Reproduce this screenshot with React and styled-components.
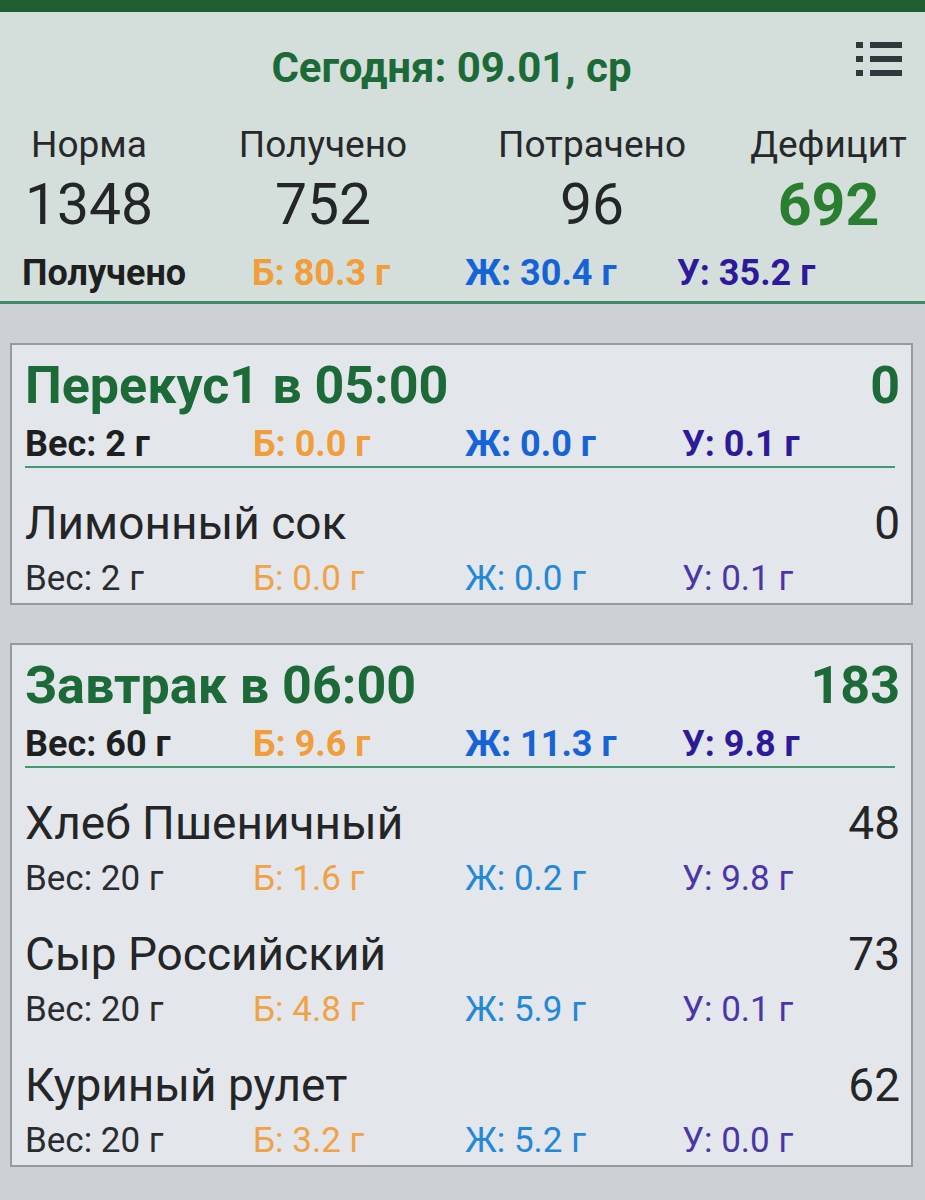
import React from "react";
import styled, { createGlobalStyle } from "styled-components";

const Global = createGlobalStyle`
  html, body { margin: 0; padding: 0; }
  body {
    background: #cdd0d5;
    font-family: Roboto, "Noto Sans", "Liberation Sans", sans-serif;
    color: #1f2123;
  }
`;

const Page = styled.div`
  width: 925px;
  min-height: 1200px;
  background: #cdd0d5;
`;

const TopBar = styled.div`
  height: 12px;
  background: #1d5f31;
`;

const Header = styled.header`
  background: #d4dfdc;
  border-bottom: 3px solid #3b8c66;
  padding: 31px 0 8px;
`;

const TitleRow = styled.div`
  display: grid;
  grid-template-columns: 1fr auto 1fr;
  align-items: center;
  padding-right: 22px;
`;

const Title = styled.h1`
  grid-column: 2;
  margin: 0;
  font-size: 42px;
  line-height: 50px;
  font-weight: 700;
  color: #1c6a37;
`;

const MenuButton = styled.div`
  grid-column: 3;
  justify-self: end;
  display: flex;
  align-self: start;
  margin-top: -2px;
`;

const Stats = styled.div`
  display: grid;
  grid-template-columns: 178px 290px 248px 1fr;
  margin-top: 32px;
`;

const Stat = styled.div`
  display: flex;
  flex-direction: column;
  align-items: center;
  gap: 8px;
  padding-left: ${(p) => p.$offset || 0}px;
`;

const StatLabel = styled.div`
  font-size: 37px;
  line-height: 40px;
  color: #262829;
`;

const StatValue = styled.div`
  font-size: ${(p) => (p.$accent ? 59 : 57)}px;
  line-height: 64px;
  font-weight: ${(p) => (p.$accent ? 700 : 400)};
  color: ${(p) => (p.$accent ? "#2a7e30" : "#232526")};
`;

const MacroRow = styled.div`
  display: grid;
  grid-template-columns: ${(p) => p.$cols};
  padding-left: ${(p) => p.$pad || 0}px;
  margin-top: ${(p) => p.$mt || 0}px;
  font-size: ${(p) => p.$size}px;
  line-height: ${(p) => p.$lh}px;
  font-weight: ${(p) => (p.$bold ? 700 : 400)};
  white-space: nowrap;
`;

const colors = {
  bold: { w: "#1d1f20", b: "#f09d3a", f: "#1663d6", c: "#2c1a98" },
  normal: { w: "#2a2c2e", b: "#f0a247", f: "#2388d6", c: "#4a36a8" },
};

const Macro = styled.span`
  color: ${(p) => colors[p.$bold ? "bold" : "normal"][p.$kind]};
`;

const Content = styled.main`
  padding: 39px 12px 30px 10px;
  display: flex;
  flex-direction: column;
  gap: 38px;
`;

const Card = styled.section`
  background: #e3e6ea;
  border: 2px solid #979a9f;
  padding: 13px 11px 5px 13px;
`;

const RowTop = styled.div`
  display: flex;
  justify-content: space-between;
  align-items: baseline;
  white-space: nowrap;
`;

const MealTitle = styled.div`
  font-size: 52px;
  line-height: 56px;
  font-weight: 700;
  color: #1c6a37;
`;

const Divider = styled.hr`
  margin: 2px 5px 0 0;
  border: 0;
  height: 2px;
  background: #3f9a6e;
`;

const Items = styled.div`
  display: flex;
  flex-direction: column;
  gap: 31px;
  padding-top: 30px;
`;

const ItemName = styled.div`
  font-size: 46px;
  line-height: 50px;
  color: #232526;
`;

const MenuIcon = () => (
  <svg width="48" height="36" viewBox="0 0 48 36">
    <g fill="#2f383c">
      <rect x="1" y="1" width="7" height="6" />
      <rect x="15" y="1" width="32" height="6" />
      <rect x="1" y="15" width="7" height="6" />
      <rect x="15" y="15" width="32" height="6" />
      <rect x="1" y="29" width="7" height="6" />
      <rect x="15" y="29" width="32" height="6" />
    </g>
  </svg>
);

const CARD_COLS = "228px 212px 217px 1fr";

const MacroLine = ({ m, bold, size, lh, mt, first }) => (
  <MacroRow $cols={CARD_COLS} $size={size} $lh={lh} $bold={bold} $mt={mt}>
    <Macro $kind="w" $bold={bold}>{first}</Macro>
    <Macro $kind="b" $bold={bold}>Б: {m[0]} г</Macro>
    <Macro $kind="f" $bold={bold}>Ж: {m[1]} г</Macro>
    <Macro $kind="c" $bold={bold}>У: {m[2]} г</Macro>
  </MacroRow>
);

const meals = [
  {
    title: "Перекус1 в 05:00",
    kcal: "0",
    weight: "2",
    m: ["0.0", "0.0", "0.1"],
    items: [{ name: "Лимонный сок", kcal: "0", weight: "2", m: ["0.0", "0.0", "0.1"] }],
  },
  {
    title: "Завтрак в 06:00",
    kcal: "183",
    weight: "60",
    m: ["9.6", "11.3", "9.8"],
    items: [
      { name: "Хлеб Пшеничный", kcal: "48", weight: "20", m: ["1.6", "0.2", "9.8"] },
      { name: "Сыр Российский", kcal: "73", weight: "20", m: ["4.8", "5.9", "0.1"] },
      { name: "Куриный рулет", kcal: "62", weight: "20", m: ["3.2", "5.2", "0.0"] },
    ],
  },
];

export default function App() {
  return (
    <Page>
      <Global />
      <TopBar />
      <Header>
        <TitleRow>
          <Title>Сегодня: 09.01, ср</Title>
          <MenuButton>
            <MenuIcon />
          </MenuButton>
        </TitleRow>
        <Stats>
          <Stat>
            <StatLabel>Норма</StatLabel>
            <StatValue>1348</StatValue>
          </Stat>
          <Stat>
            <StatLabel>Получено</StatLabel>
            <StatValue>752</StatValue>
          </Stat>
          <Stat>
            <StatLabel>Потрачено</StatLabel>
            <StatValue>96</StatValue>
          </Stat>
          <Stat $offset={16}>
            <StatLabel>Дефицит</StatLabel>
            <StatValue $accent>692</StatValue>
          </Stat>
        </Stats>
        <MacroRow $cols="230px 213px 212px 1fr" $pad={22} $size={36} $lh={40} $bold $mt={16}>
          <Macro $kind="w" $bold>Получено</Macro>
          <Macro $kind="b" $bold>Б: 80.3 г</Macro>
          <Macro $kind="f" $bold>Ж: 30.4 г</Macro>
          <Macro $kind="c" $bold>У: 35.2 г</Macro>
        </MacroRow>
      </Header>
      <Content>
        {meals.map((meal) => (
          <Card key={meal.title}>
            <RowTop>
              <MealTitle>{meal.title}</MealTitle>
              <MealTitle>{meal.kcal}</MealTitle>
            </RowTop>
            <MacroLine m={meal.m} bold size={36} lh={40} mt={10} first={`Вес: ${meal.weight} г`} />
            <Divider />
            <Items>
              {meal.items.map((it) => (
                <div key={it.name}>
                  <RowTop>
                    <ItemName>{it.name}</ItemName>
                    <ItemName>{it.kcal}</ItemName>
                  </RowTop>
                  <MacroLine m={it.m} size={35} lh={38} mt={12} first={`Вес: ${it.weight} г`} />
                </div>
              ))}
            </Items>
          </Card>
        ))}
      </Content>
    </Page>
  );
}
